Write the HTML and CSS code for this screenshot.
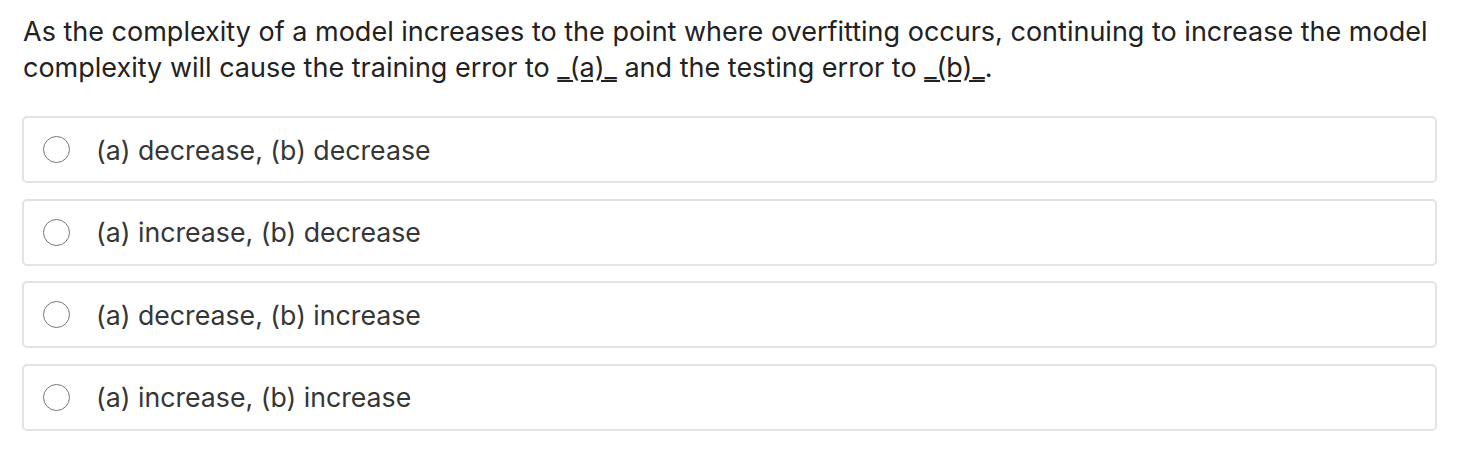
FILE: index.html
```html
<!DOCTYPE html>
<html>
<head>
<meta charset="utf-8">
<link rel="stylesheet" href="styles.css">
</head>
<body>
<div class="question">
  <p class="prompt">As the complexity of a model increases to the point where overfitting occurs, continuing to increase the model complexity will cause the training error to <u>_(a)_</u> and the testing error to <u>_(b)_</u>.</p>
  <div class="options">
    <label class="option"><span class="radio"></span><span class="label">(a) decrease, (b) decrease</span></label>
    <label class="option"><span class="radio"></span><span class="label">(a) increase, (b) decrease</span></label>
    <label class="option"><span class="radio"></span><span class="label">(a) decrease, (b) increase</span></label>
    <label class="option"><span class="radio"></span><span class="label">(a) increase, (b) increase</span></label>
  </div>
</div>
</body>
</html>
```
FILE: styles.css
```css
html, body {
  margin: 0;
  background: #ffffff;
}
body {
  font-family: Inter, "Noto Sans", sans-serif;
  color: #222222;
}
.question {
  padding: 14px 33px 0 22px;
}
.prompt {
  margin: 0 0 30px 1px;
  font-size: 27px;
  line-height: 36px;
}
.prompt u {
  text-underline-offset: 3px;
}
.options {
  display: flex;
  flex-direction: column;
  gap: 15.5px;
}
.option {
  display: flex;
  align-items: center;
  height: 67px;
  box-sizing: border-box;
  border: 2px solid #e3e3e3;
  border-radius: 5px;
  padding-left: 19px;
}
.radio {
  width: 27px;
  height: 27px;
  box-sizing: border-box;
  border: 1.5px solid #757575;
  border-radius: 50%;
  flex: none;
}
.label {
  margin-left: 26px;
  font-size: 26.7px;
  color: #363636;
}
```
